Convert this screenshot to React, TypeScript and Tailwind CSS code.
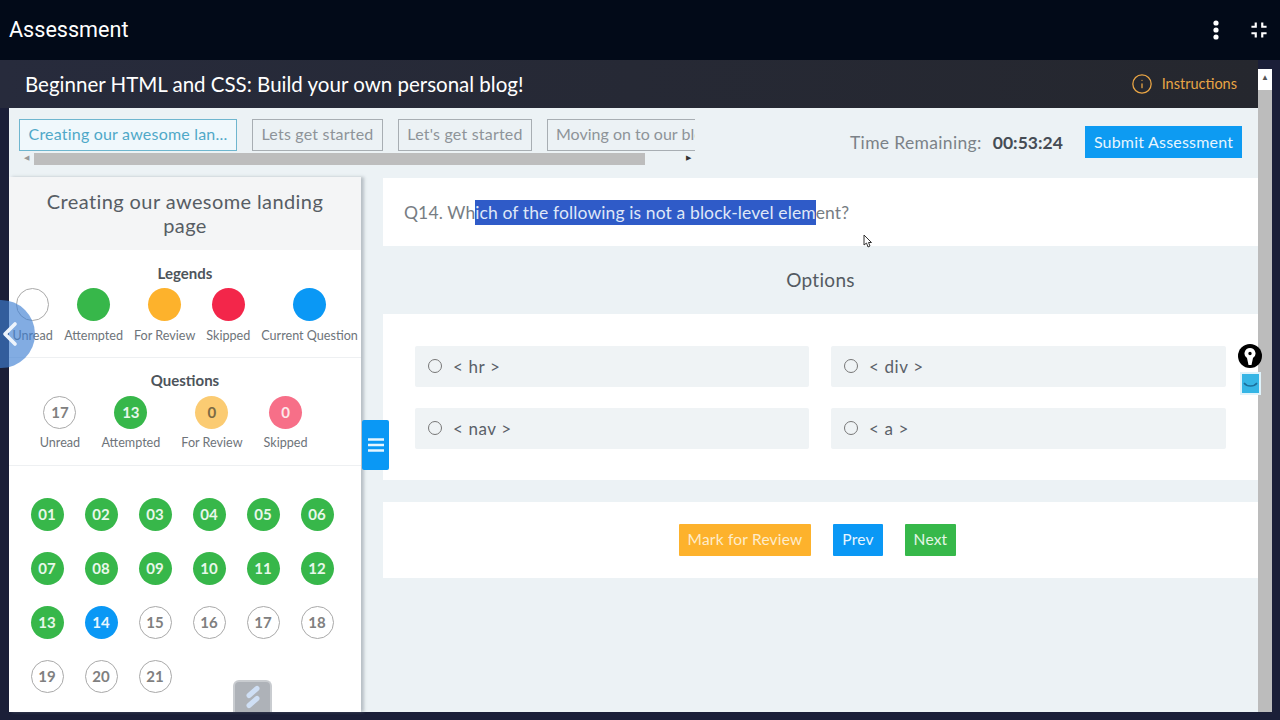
import { Info, ChevronLeft } from 'lucide-react';

const legends = [
  { label: 'Unread', cls: 'border border-[#a9a9a9] bg-white' },
  { label: 'Attempted', cls: 'bg-[#37b74a]' },
  { label: 'For Review', cls: 'bg-[#fdb22c]' },
  { label: 'Skipped', cls: 'bg-[#f3264a]' },
  { label: 'Current Question', cls: 'bg-[#0a98f5]' },
];

const counts = [
  { label: 'Unread', value: '17', cls: 'border border-[#a9a9a9] bg-white text-[#808080]' },
  { label: 'Attempted', value: '13', cls: 'bg-[#37b74a] text-[#e8f7ea]' },
  { label: 'For Review', value: '0', cls: 'bg-[#fbcb72] text-[#7c6a44]' },
  { label: 'Skipped', value: '0', cls: 'bg-[#f76f88] text-[#fde7ea]' },
];

const questions = Array.from({ length: 21 }, (_, i) => i + 1);

function bubbleClass(n: number) {
  if (n < 14) return 'bg-[#37b74a] text-[#e8f7ea]';
  if (n === 14) return 'bg-[#0a98f5] text-[#e8f5fe]';
  return 'border border-[#a9a9a9] bg-white text-[#808080]';
}

function Option({ text }: { text: string }) {
  return (
    <div className="flex h-[41px] items-center gap-[11px] rounded-[2px] bg-[#eff3f5] pl-[13px] text-[17px] tracking-[0.6px] text-[#5a6068]">
      <span className="mb-[2px] h-[14px] w-[14px] rounded-full border-[1.5px] border-[#777]" />
      <span>{text}</span>
    </div>
  );
}

export default function App() {
  return (
    <div className="relative h-[720px] w-[1280px] overflow-hidden bg-[#1b1f38] font-['Lato',sans-serif]">
      {/* top bar */}
      <header className="flex h-[60px] items-center justify-between bg-[#020a18] pl-[9px] pr-[8px]">
        <span className="font-['Roboto',sans-serif] text-[21.6px] text-white">Assessment</span>
        <div className="flex items-center gap-[25px]">
          <svg width="10" height="20" viewBox="0 0 10 20" fill="white">
            <circle cx="5" cy="3" r="2.6" />
            <circle cx="5" cy="10" r="2.6" />
            <circle cx="5" cy="17" r="2.6" />
          </svg>
          <svg width="26" height="26" viewBox="0 0 24 24" fill="white">
            <path d="M5 16h3v3h2v-5H5v2zm3-8H5v2h5V5H8v3zm6 11h2v-3h3v-2h-5v5zm2-11V5h-2v5h5V8h-3z" />
          </svg>
        </div>
      </header>

      <div className="flex h-[652px]">
        <div className="flex w-[1258px] flex-col">
          {/* course title */}
          <div className="flex h-[48px] shrink-0 items-center justify-between bg-gradient-to-r from-[#272b3c] to-[#25272e] pl-[25px] pr-[21px]">
            <span className="text-[20.5px] text-white">Beginner HTML and CSS: Build your own personal blog!</span>
            <div className="flex items-center gap-[9px] text-[#e9a545]">
              <Info size={22} strokeWidth={1.4} />
              <span className="text-[14.5px]">Instructions</span>
            </div>
          </div>

          <div className="flex min-h-0 flex-1 pl-[9px]">
            <div className="relative flex min-w-0 flex-1 flex-col bg-[#ecf2f5]">
              {/* sections + timer */}
              <div className="flex h-[69px] shrink-0 justify-between pl-[10px] pr-[16px]">
                <div className="w-[676px] pt-[11px]">
                  <div className="flex gap-[15px] overflow-hidden text-[16px] tracking-[0.2px] text-[#8e9499]">
                    <span className="flex h-[32px] w-[218px] shrink-0 items-center justify-center border border-[#6fb6cf] bg-[#f0f8fc] pb-[2px] text-[#4fa8c8]">Creating our awesome lan...</span>
                    <span className="flex h-[32px] w-[131px] shrink-0 items-center justify-center border border-[#a8aeb3] pb-[2px]">Lets get started</span>
                    <span className="flex h-[32px] w-[134px] shrink-0 items-center justify-center border border-[#a8aeb3] pb-[2px]">Let's get started</span>
                    <span className="flex h-[32px] w-[170px] shrink-0 items-center overflow-hidden whitespace-nowrap border border-r-0 border-[#a8aeb3] pb-[2px] pl-[8px] tracking-[0px]">Moving on to our blog</span>
                  </div>
                  <div className="mt-[2px] flex h-[12px] items-center">
                    <span className="mb-[3px] flex w-[15px] justify-center text-[7px] text-[#999]">◀</span>
                    <div className="h-[12px] w-[611px] bg-[#bdbdbd]" />
                    <div className="mb-[3px] flex flex-1 justify-end pr-[4px] text-[7px] text-[#333]">▶</div>
                  </div>
                </div>
                <div className="flex items-start pt-[18px]">
                  <span className="mt-[4px] text-[17.5px] tracking-[0.33px] text-[#7b8288]">Time Remaining:</span>
                  <span className="ml-[11px] mt-[4px] text-[17.5px] font-bold tracking-[0.05px] text-[#454c54]">00:53:24</span>
                  <button className="ml-[22px] h-[32px] w-[157px] bg-[#0d9bf2] text-[16px] tracking-[0.2px] text-[#e6f5fe]">Submit Assessment</button>
                </div>
              </div>

              <div className="flex min-h-0 flex-1 gap-[22px]">
                {/* sidebar */}
                <aside className="w-[352px] shrink-0 bg-white shadow-[3px_0_3px_rgba(120,130,140,0.45)]">
                  <div className="flex h-[73px] items-center justify-center bg-[#f4f5f6] px-[30px] pb-[2px] text-center text-[20px] leading-[24px] tracking-[0.4px] text-[#575d64]">
                    Creating our awesome landing page
                  </div>
                  <div className="h-[108px] border-b border-[#eef0f2] pt-[14px]">
                    <h3 className="text-center text-[15px] font-bold leading-[18px] text-[#4d545b]">Legends</h3>
                    <div className="mt-[6px] flex justify-center gap-[11px]">
                      {legends.map((l) => (
                        <div key={l.label} className="flex min-w-[41px] flex-col items-center gap-[7px]">
                          <span className={`h-[33px] w-[33px] rounded-full ${l.cls}`} />
                          <span className="whitespace-nowrap text-[12.6px] leading-[16px] text-[#6e747a]">{l.label}</span>
                        </div>
                      ))}
                    </div>
                  </div>
                  <div className="h-[108px] border-b border-[#eef0f2] pt-[13px]">
                    <h3 className="text-center text-[15px] font-bold leading-[18px] text-[#4d545b]">Questions</h3>
                    <div className="mt-[7px] flex justify-center gap-[21px] pr-[23px]">
                      {counts.map((c) => (
                        <div key={c.label} className="flex min-w-[41px] flex-col items-center gap-[6px]">
                          <span className={`flex h-[33px] w-[33px] items-center justify-center rounded-full text-[15px] font-bold ${c.cls}`}>{c.value}</span>
                          <span className="whitespace-nowrap text-[12.6px] leading-[16px] text-[#6e747a]">{c.label}</span>
                        </div>
                      ))}
                    </div>
                  </div>
                  <div className="grid grid-cols-[repeat(6,33px)] gap-x-[21px] gap-y-[21px] pl-[21.5px] pt-[32px]">
                    {questions.map((n) => (
                      <span key={n} className={`flex h-[33px] w-[33px] items-center justify-center rounded-full text-[15px] font-bold ${bubbleClass(n)}`}>
                        {String(n).padStart(2, '0')}
                      </span>
                    ))}
                  </div>
                </aside>

                {/* question column */}
                <main className="min-w-0 flex-1 pt-[1px]">
                  <div className="flex h-[68px] items-start bg-white pl-[21px] pt-[22px] text-[17.5px] leading-[25px] tracking-[0.11px] text-[#777d83]">
                    <span>Q14. Wh</span>
                    <span className="bg-[#2f5bc8] text-[#dfe7f7]">ich of the following is not a block-level elem</span>
                    <span>ent?</span>
                  </div>
                  <div className="flex h-[68px] items-center justify-center text-[19px] tracking-[0.3px] text-[#545b62]">Options</div>
                  <div className="grid h-[166px] grid-cols-[394px_395px] content-start gap-x-[22px] gap-y-[21px] bg-white pl-[32px] pt-[32px]">
                    <Option text="< hr >" />
                    <Option text="< div >" />
                    <Option text="< nav >" />
                    <Option text="< a >" />
                  </div>
                  <div className="mt-[22px] flex h-[76px] items-center justify-center gap-[22px] bg-white pr-[6px] text-[15.5px] tracking-[0.2px]">
                    <button className="h-[32px] w-[132px] rounded-[1px] bg-[#fdb22c] text-[#fdeccb]">Mark for Review</button>
                    <button className="h-[32px] w-[50px] rounded-[1px] bg-[#0a98f5] text-[#e6f5fe]">Prev</button>
                    <button className="h-[32px] w-[51px] rounded-[1px] bg-[#36b84a] text-[#e3f6e6]">Next</button>
                  </div>
                </main>
              </div>
            </div>
          </div>
        </div>

        {/* page scrollbar */}
        <div className="mt-[9px] flex w-[14px] flex-col">
          <div className="flex h-[21px] items-start justify-center bg-white pt-[4px] text-[8px] leading-[8px] text-[#555]">▲</div>
          <div className="flex-1 bg-[#bcbcbc]" />
        </div>
      </div>

      {/* overlays */}
      <div className="absolute left-[-33px] top-[300px] flex h-[68px] w-[68px] items-center justify-end rounded-full bg-[#3f7fd2]/65 pr-[5px] text-[#eef4fc]">
        <ChevronLeft size={40} strokeWidth={2.2} />
      </div>
      <div className="absolute left-[362px] top-[420px] flex h-[50px] w-[27px] items-center justify-center rounded-[2px] bg-[#0a98f5]">
        <svg width="16" height="14" viewBox="0 0 16 14" fill="none" stroke="#e6f5fe" strokeWidth="2.6">
          <path d="M0 1.500h16M0 7h16M0 12.500h16" />
        </svg>
      </div>
      <div className="absolute left-[233px] top-[680px] flex h-[32px] w-[39px] items-center justify-center rounded-t-[6px] border-2 border-b-0 border-[#c9ccd0] bg-[#aeb2b8]">
        <svg width="16" height="24" viewBox="0 0 16 24" fill="none" stroke="#cfdff5" strokeWidth="5" strokeLinecap="round">
          <path d="M12 3.500 4 10.500" />
          <path d="M12 13.500 4 20.500" />
        </svg>
      </div>
      <div className="absolute left-[1238px] top-[344px] flex h-[24px] w-[24px] items-center justify-center rounded-full bg-black">
        <svg width="12" height="17" viewBox="0 0 12 17" fill="white">
          <path fillRule="evenodd" d="M6 0a5.500 5.500 0 0 0-3 10.100L4.500 17h3L9 10.100A5.500 5.500 0 0 0 6 0zm0 3.800a1.700 1.700 0 1 1 0 3.400 1.700 1.700 0 0 1 0-3.400z" />
        </svg>
      </div>
      <div className="absolute left-[1240px] top-[372px] flex h-[23px] w-[21px] items-start justify-center border-2 border-[#dff3fb] bg-[#35b5e5] pt-[8px]">
        <svg width="15" height="6" viewBox="0 0 15 6" fill="none" stroke="#1b6f9c" strokeWidth="1.5">
          <path d="M1 1c3 4 10 4 13 0" />
        </svg>
      </div>
      <svg className="absolute left-[863px] top-[234px]" width="10" height="15" viewBox="0 0 10 15" fill="white" stroke="#333" strokeWidth="1">
        <path d="M1 1v10l2.500-2 1.500 4 2-1-1.500-3.500H8.500z" />
      </svg>
    </div>
  );
}
